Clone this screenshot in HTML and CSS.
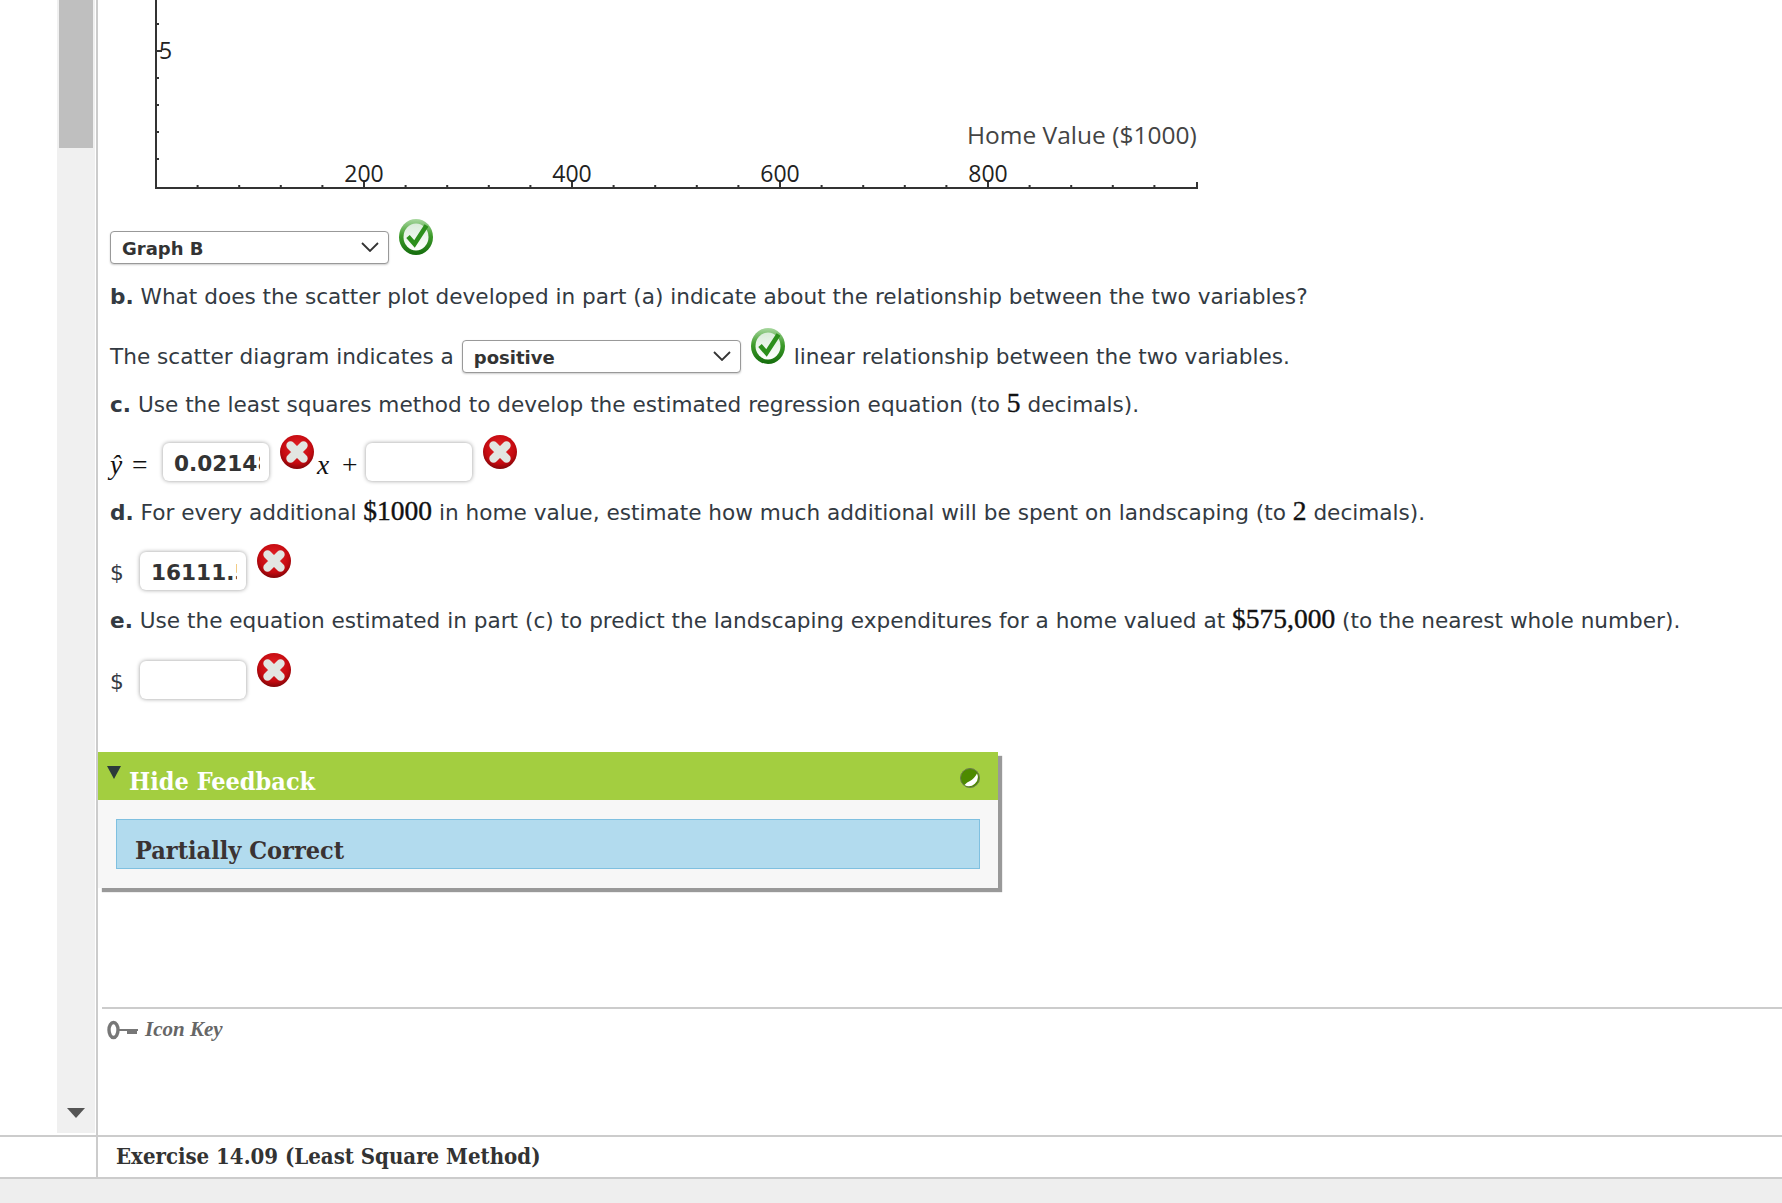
FILE: index.html
```html
<!DOCTYPE html>
<html lang="en">
<head>
    <meta charset="UTF-8">
    <title>Exercise 14.09 (Least Square Method)</title>
    <link rel="stylesheet" href="styles.css">
</head>
<body>
    <svg class="icon-defs" width="0" height="0" aria-hidden="true">
        <defs>
            <linearGradient id="ringGreen" x1="0" y1="0" x2="0" y2="1">
                <stop offset="0" stop-color="#a9d8a0"/>
                <stop offset="0.45" stop-color="#3f9d2c"/>
                <stop offset="1" stop-color="#146c0c"/>
            </linearGradient>
            <linearGradient id="faceGreen" x1="0" y1="0" x2="0" y2="1">
                <stop offset="0" stop-color="#d9ecd9"/>
                <stop offset="1" stop-color="#ffffff"/>
            </linearGradient>
            <radialGradient id="ballRed" cx="0.5" cy="0.4" r="0.62">
                <stop offset="0" stop-color="#e8262a"/>
                <stop offset="0.7" stop-color="#c40a10"/>
                <stop offset="1" stop-color="#7c0508"/>
            </radialGradient>
            <symbol id="iconCheck" viewBox="0 0 34 36">
                <ellipse cx="17" cy="18" rx="17" ry="18" fill="url(#ringGreen)"/>
                <ellipse cx="17" cy="18" rx="12.5" ry="13.5" fill="url(#faceGreen)"/>
                <path d="M9 17.5 L15.5 25 L27.5 6.5" fill="none" stroke="#2c8f1c" stroke-width="4.6"/>
            </symbol>
            <symbol id="iconCross" viewBox="0 0 34 34">
                <circle cx="17" cy="17" r="17" fill="url(#ballRed)"/>
                <path d="M10.500 10.500 L23.500 23.500 M23.500 10.500 L10.500 23.500" stroke="#e2e6e2" stroke-width="8.400" stroke-linecap="round"/>
            </symbol>
        </defs>
    </svg>

    <div class="workspace">
        <aside class="rail">
            <div class="scroll-track">
                <div class="scroll-thumb"></div>
                <div class="scroll-arrow"></div>
            </div>
        </aside>

        <main class="question">
            <svg class="chart" width="1110" height="219" viewBox="0 0 1110 219">
                <path class="axis" d="M47 0 V188 H1088 V182"/>
                <path class="tick" d="M47 24 h3 M47 51 h6 M47 78 h3 M47 105 h3 M47 132 h3 M47 159 h3"/>
                <path class="tick" d="M88.600 188 v-3 M130.200 188 v-3 M171.800 188 v-3 M213.400 188 v-3 M296.600 188 v-3 M338.200 188 v-3 M379.800 188 v-3 M421.400 188 v-3 M504.600 188 v-3 M546.200 188 v-3 M587.800 188 v-3 M629.400 188 v-3 M712.600 188 v-3 M754.200 188 v-3 M795.800 188 v-3 M837.400 188 v-3 M920.600 188 v-3 M962.200 188 v-3 M1003.800 188 v-3 M1045.400 188 v-3"/>
                <path class="tick" d="M255 188 v-7 M463 188 v-7 M671 188 v-7 M879 188 v-7"/>
                <text class="chart-num" x="50" y="59">5</text>
                <text class="chart-num" x="255" y="182" text-anchor="middle">200</text>
                <text class="chart-num" x="463" y="182" text-anchor="middle">400</text>
                <text class="chart-num" x="671" y="182" text-anchor="middle">600</text>
                <text class="chart-num" x="879" y="182" text-anchor="middle">800</text>
                <text class="chart-title" x="858" y="144">Home Value ($1000)</text>
            </svg>

            <div class="answer-row row-a">
                <div class="picker">
                    <select class="picker-input"><option>Graph B</option></select>
                    <svg class="picker-arrow" width="18" height="10" viewBox="0 0 18 10"><path d="M1 1 L9 9 L17 1" fill="none" stroke="#333" stroke-width="1.8"/></svg>
                </div>
                <svg class="mark"><use href="#iconCheck"/></svg>
            </div>

            <p class="line line-b"><b>b.</b> What does the scatter plot developed in part (a) indicate about the relationship between the two variables?</p>

            <div class="answer-row row-scatter">
                <span class="inline-text first-text">The scatter diagram indicates a</span>
                <div class="picker picker-trend">
                    <select class="picker-input"><option>positive</option></select>
                    <svg class="picker-arrow" width="18" height="10" viewBox="0 0 18 10"><path d="M1 1 L9 9 L17 1" fill="none" stroke="#333" stroke-width="1.8"/></svg>
                </div>
                <svg class="mark"><use href="#iconCheck"/></svg>
                <span class="inline-text">linear relationship between the two variables.</span>
            </div>

            <p class="line line-c"><b>c.</b> Use the least squares method to develop the estimated regression equation (to <span class="math">5</span> decimals).</p>

            <div class="answer-row row-eq">
                <span class="math math-eq"><i>ŷ</i> =</span>
                <input class="num-input" type="text" value="0.02148" readonly>
                <svg class="mark mark-x"><use href="#iconCross"/></svg>
                <span class="math math-x"><i>x</i> +</span>
                <input class="num-input" type="text" readonly>
                <svg class="mark mark-x"><use href="#iconCross"/></svg>
            </div>

            <p class="line line-d"><b>d.</b> For every additional <span class="math">$1000</span> in home value, estimate how much additional will be spent on landscaping (to <span class="math">2</span> decimals).</p>

            <div class="answer-row row-money">
                <span class="inline-text dollar">$</span>
                <input class="num-input" type="text" value="16111.57" readonly>
                <svg class="mark mark-x"><use href="#iconCross"/></svg>
            </div>

            <p class="line line-e"><b>e.</b> Use the equation estimated in part (c) to predict the landscaping expenditures for a home valued at <span class="math">$575,000</span> (to the nearest whole number).</p>

            <div class="answer-row row-money">
                <span class="inline-text dollar">$</span>
                <input class="num-input" type="text" readonly>
                <svg class="mark mark-x"><use href="#iconCross"/></svg>
            </div>

            <section class="feedback">
                <header class="feedback-head">
                    <span class="feedback-arrow"></span>
                    <h2 class="feedback-title">Hide Feedback</h2>
                    <svg class="feedback-status" width="20" height="20" viewBox="0 0 20 20">
                        <circle cx="10" cy="10" r="9.500" fill="#4d8a00" stroke="#6a7a50"/>
                        <path d="M17 5.500 A9 9 0 0 1 4.500 17 Q7 14 10 13 Q14 11 17 5.500 Z" fill="#fff"/>
                    </svg>
                </header>
                <div class="feedback-body">
                    <div class="feedback-result">Partially Correct</div>
                </div>
            </section>

            <div class="icon-key">
                <svg width="32" height="22" viewBox="0 0 32 22">
                    <ellipse cx="6.500" cy="11" rx="4.500" ry="7.500" fill="none" stroke="#777" stroke-width="3.400"/>
                    <path d="M11 10 H31 V12 H11 Z M20 12 H30 V15 H20 Z" fill="#777"/>
                </svg>
                <em>Icon Key</em>
            </div>
        </main>
    </div>

    <footer class="exercise-bar">
        <div class="exercise-spacer"></div>
        <div class="exercise-title">Exercise 14.09 (Least Square Method)</div>
    </footer>
    <div class="page-band"></div>
</body>
</html>
```

FILE: styles.css
```css
html, body {
    margin: 0;
    height: 1203px;
    overflow: hidden;
}

body {
    background: #fff;
    color: #333a42;
    font-family: "DejaVu Sans", sans-serif;
    font-size: 21.62px;
}

.icon-defs {
    position: absolute;
}

.workspace {
    display: flex;
    height: 1135px;
}

.rail {
    flex: 0 0 98px;
    padding-left: 57px;
    box-sizing: border-box;
    border-right: 2px solid #ccc;
}

.scroll-track {
    position: relative;
    width: 38px;
    height: 1133px;
    background: #f0f0f0;
}

.scroll-thumb {
    width: 34px;
    height: 148px;
    margin-left: 2px;
    background: #bfbfbf;
}

.scroll-arrow {
    position: absolute;
    left: 10px;
    bottom: 15px;
    border-left: 9px solid transparent;
    border-right: 9px solid transparent;
    border-top: 10px solid #555;
}

.question {
    flex: 1;
    min-width: 0;
}

.chart {
    display: block;
    margin-left: 11px;
}

.axis {
    fill: none;
    stroke: #333;
    stroke-width: 2;
}

.tick {
    fill: none;
    stroke: #333;
    stroke-width: 2;
}

.chart-num {
    font-family: "Open Sans", sans-serif;
    font-size: 23px;
    fill: #222;
}

.chart-title {
    font-family: "Open Sans", sans-serif;
    font-size: 24.5px;
    fill: #444;
}

.answer-row {
    display: flex;
    align-items: flex-start;
    margin-left: 12px;
}

.row-a {
    height: 63px;
}

.mark {
    flex: none;
    width: 34px;
    height: 36px;
    margin-left: 10px;
}

.mark-x {
    height: 34px;
    margin-left: 11px;
}

.picker {
    position: relative;
    flex: none;
    width: 279px;
    height: 33px;
    margin-top: 12px;
}

.picker-trend {
    margin-left: 8px;
}

.picker-input {
    display: block;
    width: 100%;
    height: 100%;
    padding: 2px 0 0 11px;
    appearance: none;
    -webkit-appearance: none;
    background: #fff;
    border: 1px solid #999;
    border-radius: 4px;
    box-shadow: 0 1px 2px rgba(0,0,0,0.2);
    color: #333;
    font-family: "DejaVu Sans", sans-serif;
    font-size: 18px;
    font-weight: 700;
}

.picker-arrow {
    position: absolute;
    right: 10px;
    top: 11px;
}

.line {
    margin: 0;
    line-height: 30px;
    margin-left: 12px;
    white-space: nowrap;
}

.line-b {
    height: 46px;
}

.line-c {
    height: 45px;
}

.line-d {
    height: 46px;
}

.line-e {
    height: 47px;
}

.math {
    font-family: "Liberation Serif", serif;
    font-size: 27.5px;
    line-height: 0;
    color: #111;
    -webkit-text-stroke: 0.4px #111;
}

.row-scatter {
    height: 62px;
}

.inline-text {
    margin-left: 9px;
    margin-top: 14px;
    line-height: 30px;
}

.first-text {
    margin-left: 0;
}

.row-eq {
    height: 63px;
}

.math-eq {
    flex: none;
    width: 53px;
    margin-top: 15px;
    line-height: 30px;
    -webkit-text-stroke: 0;
    word-spacing: 3px;
}

.math-x {
    flex: none;
    width: 49px;
    margin: 15px 0 0 3px;
    line-height: 30px;
    -webkit-text-stroke: 0;
    word-spacing: 6px;
}

.num-input {
    flex: none;
    box-sizing: border-box;
    width: 106px;
    height: 38px;
    margin-top: 8px;
    padding: 2px 9px 0 11px;
    border: none;
    border-radius: 6px;
    outline: none;
    box-shadow: 0 0 4px rgba(0,0,0,0.4);
    background: #fff;
    color: #333;
    font-family: "DejaVu Sans", sans-serif;
    font-size: 21.62px;
    font-weight: 700;
}

.row-money {
    height: 62px;
}

.dollar {
    width: 30px;
    margin-left: 0;
}

.feedback {
    width: 900px;
    margin-top: 37px;
    background: #f7f7f7;
    box-shadow: 4px 4px 1px #999;
}

.feedback-head {
    display: flex;
    align-items: flex-start;
    height: 48px;
    background: #a3ce40;
}

.feedback-arrow {
    flex: none;
    margin: 14px 0 0 9px;
    border-left: 7px solid transparent;
    border-right: 7px solid transparent;
    border-top: 13px solid #2c3a3a;
}

.feedback-title {
    flex: 1;
    margin: 14px 0 0 8px;
    color: #fff;
    font-family: "DejaVu Serif Condensed", "Liberation Serif", serif;
    font-size: 25px;
    font-weight: 700;
    line-height: 32px;
}

.feedback-status {
    margin: 16px 18px 0 0;
}

.feedback-body {
    padding: 19px 18px;
}

.feedback-result {
    box-sizing: border-box;
    height: 50px;
    padding: 15px 0 0 18px;
    background: #b2dbee;
    border: 1px solid #7fc0e0;
    color: #3a3333;
    font-family: "DejaVu Serif Condensed", "Liberation Serif", serif;
    font-size: 25px;
    font-weight: 700;
    line-height: 32px;
}

.icon-key {
    display: flex;
    align-items: center;
    gap: 6px;
    margin: 119px 0 0 4px;
    padding: 8px 0 0 5px;
    border-top: 2px solid #ccc;
    color: #666;
    font-family: "Liberation Serif", serif;
    font-size: 21px;
    font-weight: 700;
}

.exercise-bar {
    display: flex;
    height: 40px;
    border-top: 2px solid #ccc;
    border-bottom: 2px solid #ccc;
}

.exercise-spacer {
    flex: 0 0 98px;
    box-sizing: border-box;
    border-right: 2px solid #ccc;
}

.exercise-title {
    padding: 3px 0 0 18px;
    color: #333;
    font-family: "DejaVu Serif Condensed", "Liberation Serif", serif;
    font-size: 22px;
    font-weight: 700;
    line-height: 32px;
}

.page-band {
    height: 25px;
    background: #eee;
}
```
